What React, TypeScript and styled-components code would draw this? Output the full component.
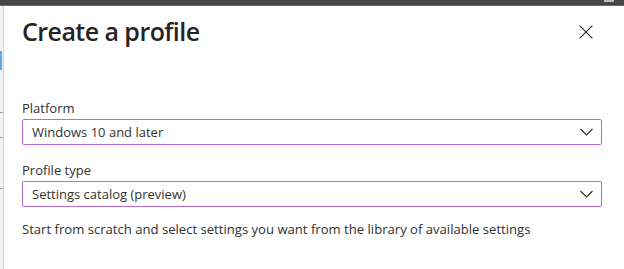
import React from "react";
import styled, { createGlobalStyle } from "styled-components";

const GlobalStyle = createGlobalStyle`
  html, body { margin: 0; padding: 0; background: #ffffff; }
  body { font-family: "Open Sans", "Noto Sans", sans-serif; color: #323130; }
`;

const Screen = styled.div`
  width: 624px;
  height: 269px;
  display: flex;
  flex-direction: column;
  overflow: hidden;
  background: #ffffff;
`;

const TopBar = styled.div`
  height: 5px;
  flex: none;
  background: #474543;
  border-bottom: 1px solid #6b6966;
  position: relative;
`;

const TopBarTab = styled.div`
  position: absolute;
  right: 10px;
  top: 0;
  width: 10px;
  height: 2px;
  background: #bdbbb8;
`;

const Body = styled.div`
  flex: 1;
  display: flex;
`;

const Rail = styled.div`
  width: 3px;
  flex: none;
  background: #f3f2f1;
  border-right: 1px solid #d6d4d2;
  position: relative;
`;

const RailMark = styled.div<{ $top: number; $h: number; $color: string; $w: number }>`
  position: absolute;
  left: 0;
  top: ${(p) => p.$top}px;
  width: ${(p) => p.$w}px;
  height: ${(p) => p.$h}px;
  background: ${(p) => p.$color};
`;

const Panel = styled.div`
  flex: 1;
  padding: 0 22px 0 18px;
  display: flex;
  flex-direction: column;
`;

const Header = styled.div`
  display: flex;
  align-items: center;
  justify-content: space-between;
  padding-top: 9px;
  margin-bottom: 52px;
`;

const Title = styled.h1`
  margin: 0;
  font-family: "Open Sans", "Noto Sans", sans-serif;
  font-weight: 600;
  font-size: 25px;
  line-height: 32px;
  color: #252423;
  letter-spacing: -0.55px;
`;

const CloseButton = styled.button`
  border: none;
  background: none;
  padding: 0;
  width: 14px;
  height: 14px;
  margin-right: 9px;
  margin-top: 2px;
  display: flex;
  color: #323130;
`;

const Field = styled.div<{ $spacing: number }>`
  display: flex;
  flex-direction: column;
  margin-bottom: ${(p) => p.$spacing}px;
`;

const Label = styled.label`
  font-size: 13px;
  line-height: 18px;
  margin-bottom: 2px;
  color: #323130;
`;

const Select = styled.div`
  height: 24px;
  border: 1px solid #b86bd6;
  border-radius: 2px;
  display: flex;
  align-items: center;
  justify-content: space-between;
  padding: 0 8px 0 9px;
  font-size: 13px;
  color: #323130;
`;

const Description = styled.p`
  margin: 0;
  font-size: 13.1px;
  line-height: 18px;
  color: #323130;
`;

const Chevron = () => (
  <svg width="13" height="8" viewBox="0 0 13 8" fill="none">
    <path d="M0.5 1 L6.5 7 L12.5 1" stroke="#323130" strokeWidth="1.2" />
  </svg>
);

const CloseIcon = () => (
  <svg width="14" height="14" viewBox="0 0 14 14" fill="none">
    <path d="M0.6 0.6 L13.4 13.4 M13.4 0.6 L0.6 13.4" stroke="#323130" strokeWidth="1.25" />
  </svg>
);

export default function App() {
  return (
    <Screen>
      <GlobalStyle />
      <TopBar>
        <TopBarTab />
      </TopBar>
      <Body>
        <Rail>
          <RailMark $top={45} $h={19} $w={2} $color="#5aaaf0" />
          <RailMark $top={106} $h={1} $w={3} $color="#a19f9d" />
          <RailMark $top={131} $h={1} $w={3} $color="#a19f9d" />
          <RailMark $top={182} $h={1} $w={3} $color="#a19f9d" />
        </Rail>
        <Panel>
          <Header>
            <Title>Create a profile</Title>
            <CloseButton aria-label="Close">
              <CloseIcon />
            </CloseButton>
          </Header>
          <Field $spacing={16}>
            <Label>Platform</Label>
            <Select>
              <span>Windows 10 and later</span>
              <Chevron />
            </Select>
          </Field>
          <Field $spacing={13}>
            <Label>Profile type</Label>
            <Select>
              <span>Settings catalog (preview)</span>
              <Chevron />
            </Select>
          </Field>
          <Description>
            Start from scratch and select settings you want from the library of available settings
          </Description>
        </Panel>
      </Body>
    </Screen>
  );
}
